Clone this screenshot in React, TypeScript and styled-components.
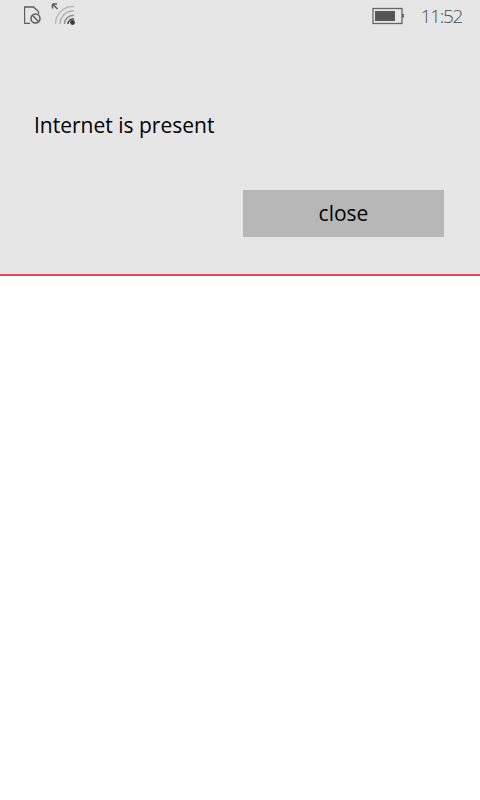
import React from "react";
import styled, { createGlobalStyle } from "styled-components";

const Global = createGlobalStyle`
  html, body { margin: 0; padding: 0; background: #fff; }
  body { font-family: "Open Sans", "Noto Sans", sans-serif; }
`;

const Page = styled.div`
  width: 480px;
  height: 800px;
  background: #fff;
  overflow: hidden;
`;

const Dialog = styled.section`
  height: 274px;
  background: #e6e6e6;
  border-bottom: 2px solid #e8475a;
  display: flex;
  flex-direction: column;
`;

const StatusBar = styled.header`
  height: 32px;
  padding: 0 18px 0 24px;
  display: flex;
  align-items: flex-start;
  justify-content: space-between;
`;

const LeftIcons = styled.div`
  display: flex;
  align-items: flex-start;
  gap: 9px;
  padding-top: 2px;
`;

const RightGroup = styled.div`
  display: flex;
  align-items: flex-start;
  gap: 17px;
`;

const BatteryIcon = styled.svg`
  margin-top: 7px;
`;

const Clock = styled.span`
  font-size: 19px;
  font-weight: 300;
  letter-spacing: -1.3px;
  color: #4f4f4f;
  line-height: 32px;
`;

const Message = styled.p`
  margin: 78px 0 0 34px;
  font-size: 21px;
  line-height: 30px;
  color: #000;
`;

const Actions = styled.div`
  display: flex;
  justify-content: flex-end;
  padding: 50px 36px 0 0;
`;

const CloseButton = styled.button`
  width: 201px;
  height: 47px;
  border: 0;
  padding: 0 0 2px;
  background: #b7b7b7;
  color: #000;
  font-family: inherit;
  font-size: 21px;
`;

export default function App() {
  return (
    <Page>
      <Global />
      <Dialog>
        <StatusBar>
          <LeftIcons>
            <svg width="18" height="22" viewBox="0 0 18 22" fill="none" stroke="#5c5c5c">
              <path d="M6 21.5H1.5a1 1 0 0 1-1-1V5h9l5 4.5V12" strokeWidth="1.3" />
              <circle cx="11.5" cy="16.5" r="4.5" strokeWidth="1.5" />
              <path d="M8.3 13.3l6.4 6.4" strokeWidth="1.5" />
            </svg>
            <svg width="26" height="24" viewBox="0 0 26 24" fill="none">
              <path d="M1.5 2l5 5M1.5 2h4.5M1.5 2v4.5" stroke="#5c5c5c" strokeWidth="1.5" />
              <path d="M4.5 22A17.5 17.5 0 0 1 23 4.5" stroke="#b8b8b8" strokeWidth="1.4" />
              <path d="M9 22A13 13 0 0 1 23 9" stroke="#adadad" strokeWidth="1.4" />
              <path d="M13.5 22A8.5 8.5 0 0 1 23 13.5" stroke="#8f8f8f" strokeWidth="1.4" />
              <path d="M17 22A5 5 0 0 1 23 17" stroke="#505050" strokeWidth="1.5" />
              <circle cx="21.5" cy="20.5" r="2.4" fill="#3a3a3a" />
            </svg>
          </LeftIcons>
          <RightGroup>
            <BatteryIcon width="32" height="18" viewBox="0 0 32 18" fill="none">
              <rect x="1" y="1.5" width="29" height="15" stroke="#666" strokeWidth="1.3" />
              <rect x="3" y="4" width="20" height="10" fill="#555" />
              <rect x="30" y="7" width="2" height="3.5" fill="#666" />
            </BatteryIcon>
            <Clock>11:52</Clock>
          </RightGroup>
        </StatusBar>
        <Message>Internet is present</Message>
        <Actions>
          <CloseButton>close</CloseButton>
        </Actions>
      </Dialog>
    </Page>
  );
}
